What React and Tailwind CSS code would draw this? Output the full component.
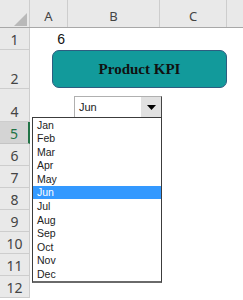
import React from 'react';

const months = ['Jan', 'Feb', 'Mar', 'Apr', 'May', 'Jun', 'Jul', 'Aug', 'Sep', 'Oct', 'Nov', 'Dec'];

// row number + height in px (row 3 is hidden)
const rows = [
  { n: '1', h: 'h-[22px]' },
  { n: '2', h: 'h-[39px]' },
  { n: '', h: 'h-[2px]' },
  { n: '4', h: 'h-[31px]' },
  { n: '5', h: 'h-[22px]', active: true },
  { n: '6', h: 'h-[22px]' },
  { n: '7', h: 'h-[22px]' },
  { n: '8', h: 'h-[22px]' },
  { n: '9', h: 'h-[22px]' },
  { n: '10', h: 'h-[22px]' },
  { n: '11', h: 'h-[22px]' },
  { n: '12', h: 'h-[22px]' },
];

const ColHead = ({ w, label }) => (
  <div className={`${w} h-full border-r border-[#cdcdcd] flex items-end justify-center pb-[4px] text-[13px] leading-none text-[#444]`}>
    {label}
  </div>
);

export default function App() {
  const selected = 'Jun';

  return (
    <div className="relative w-[243px] h-[300px] overflow-hidden bg-white font-['Noto_Sans',sans-serif]">
      {/* column headers */}
      <div className="flex h-[28px] bg-[#e9e9e9] border-b border-[#a8a8a8]">
        <div className="relative w-[30px] h-full border-r border-[#cdcdcd]">
          <svg className="absolute left-[14px] top-[13px]" width="13" height="13" viewBox="0 0 13 13">
            <polygon points="13,0 13,13 0,13" fill="#b9b9b9" />
          </svg>
        </div>
        <ColHead w="w-[38px]" label="A" />
        <ColHead w="w-[92px]" label="B" />
        <ColHead w="w-[67px]" label="C" />
        <div className="flex-1" />
      </div>

      {/* rows */}
      {rows.map((r, i) => (
        <div key={i} className={`flex ${r.h}`}>
          <div
            className={`w-[30px] h-full border-b flex items-end justify-center pb-[2px] text-[14px] leading-none ${
              r.active
                ? 'bg-[#d4d4d4] border-[#c4c4c4] text-[#217346] border-r-2 border-r-[#217346]'
                : 'bg-[#e9e9e9] border-[#cdcdcd] text-[#444] border-r border-r-[#cdcdcd]'
            }`}
          >
            {r.n}
          </div>
          <div className="flex-1 flex">
            {r.n === '1' && (
              <div className="w-[38px] flex items-end justify-end pr-[3px] pb-[4px] font-['Liberation_Sans',sans-serif] text-[14px] leading-none text-[#111]">
                6
              </div>
            )}
          </div>
        </div>
      ))}

      {/* shape */}
      <div className="absolute left-[52px] top-[50px] w-[175px] h-[38px] rounded-[7px] bg-[#129a9b] border-[1.5px] border-[#2d5d80] flex items-center justify-center">
        <span className="font-['Liberation_Serif',serif] font-bold text-[15px] text-[#111] leading-none">Product KPI</span>
      </div>

      {/* combo box */}
      <div className="absolute left-[74px] top-[96px] w-[88px] h-[22px] flex bg-white border-t border-l border-[#b0b0b0] border-r border-r-[#444]">
        <div className="flex-1 flex items-center pl-[4px] font-['Liberation_Sans',sans-serif] text-[11px] text-[#222]">{selected}</div>
        <div className="w-[20px] h-full bg-[#e1e1e1] flex items-center justify-center">
          <svg width="9" height="5" viewBox="0 0 9 5">
            <polygon points="0,0 9,0 4.5,5" fill="#000" />
          </svg>
        </div>
      </div>

      {/* drop list */}
      <div className="absolute left-[32px] top-[117px] w-[130px] h-[166px] bg-white border border-[#3c3c3c] border-b-2 border-b-[#6a6a6a] flex flex-col">
        {months.map((m) => (
          <div
            key={m}
            className={`h-[13.75px] flex items-center pl-[4px] font-['Liberation_Sans',sans-serif] text-[10.5px] leading-none ${
              m === selected ? 'bg-[#3399ff] text-white' : 'text-[#222]'
            }`}
          >
            {m}
          </div>
        ))}
      </div>
    </div>
  );
}
